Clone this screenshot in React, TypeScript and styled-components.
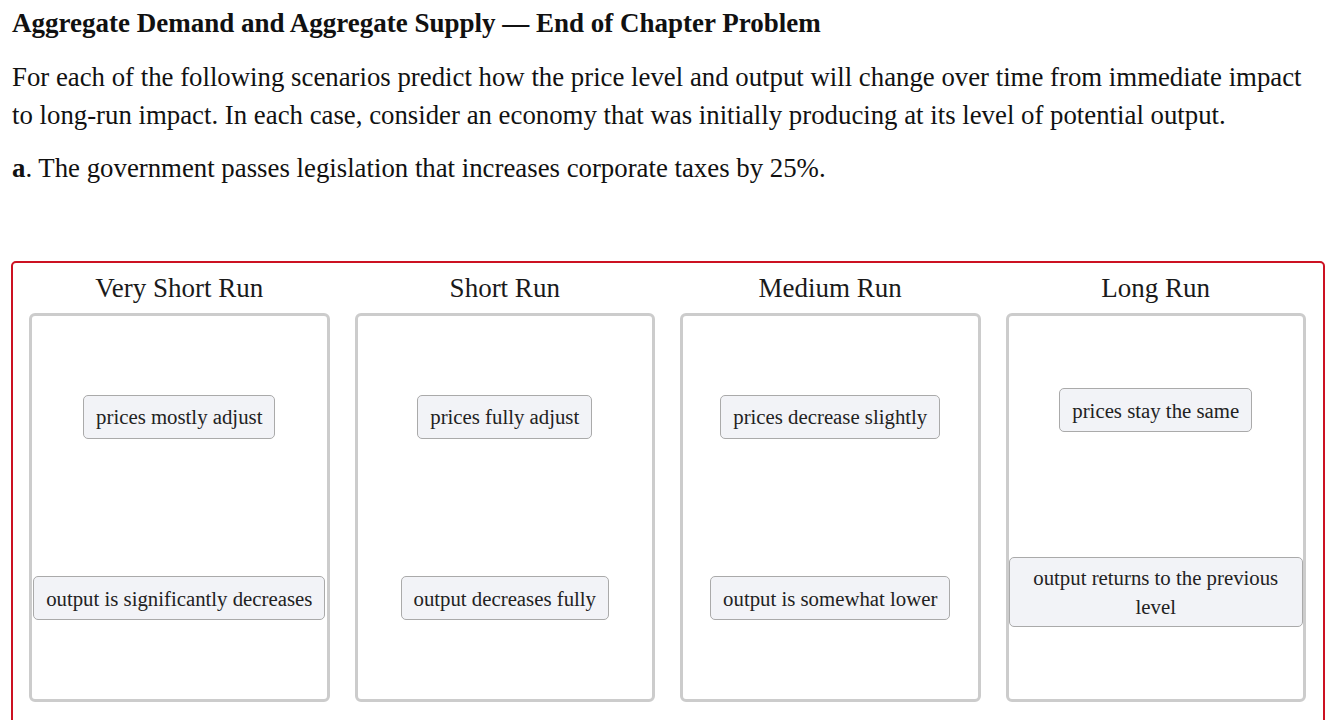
import styled, { createGlobalStyle } from "styled-components";

type Stage = {
  title: string;
  cards: string[];
};

const stages: Stage[] = [
  {
    title: "Very Short Run",
    cards: ["prices mostly adjust", "output is significantly decreases"],
  },
  {
    title: "Short Run",
    cards: ["prices fully adjust", "output decreases fully"],
  },
  {
    title: "Medium Run",
    cards: ["prices decrease slightly", "output is somewhat lower"],
  },
  {
    title: "Long Run",
    cards: ["prices stay the same", "output returns to the previous level"],
  },
];

const GlobalStyle = createGlobalStyle`
  html, body {
    margin: 0;
    padding: 0;
    background: #ffffff;
  }
  body {
    font-family: "Liberation Serif", "Times New Roman", serif;
    color: #111111;
  }
`;

const Page = styled.div`
  padding: 6px 15px 0 11px;
`;

const Title = styled.h1`
  margin: 0 0 0 1px;
  font-size: 27px;
  font-weight: 700;
  line-height: 34px;
`;

const Prompt = styled.p`
  margin: 18px 0 0 1px;
  font-size: 26.8px;
  line-height: 38px;
`;

const Part = styled.p`
  margin: 15px 0 0 1px;
  font-size: 26.8px;
  line-height: 38px;
`;

const Board = styled.div`
  margin-top: 74px;
  border: 2px solid #cc1122;
  border-radius: 5px;
  padding: 8px 17px 24px 16px;
  display: grid;
  grid-template-columns: repeat(4, 1fr);
  column-gap: 25px;
`;

const Column = styled.div`
  display: flex;
  flex-direction: column;
`;

const ColumnTitle = styled.div`
  text-align: center;
  font-size: 27px;
  line-height: 34px;
  height: 42px;
  color: #1a1a1a;
`;

const DropZone = styled.div`
  height: 389px;
  box-sizing: border-box;
  border: 3px solid #cccccc;
  border-radius: 6px;
  padding: 10px 0;
  display: flex;
  flex-direction: column;
  justify-content: space-around;
  align-items: center;
`;

const Card = styled.div`
  box-sizing: border-box;
  max-width: 100%;
  min-height: 44px;
  display: flex;
  align-items: center;
  justify-content: center;
  background: #f2f3f7;
  border: 1px solid #aaaaaa;
  border-radius: 5px;
  padding: 5px 12px;
  font-size: 20.8px;
  line-height: 29px;
  text-align: center;
  color: #222222;
`;

export default function App() {
  return (
    <>
      <GlobalStyle />
      <Page>
        <Title>Aggregate Demand and Aggregate Supply — End of Chapter Problem</Title>
        <Prompt>
          For each of the following scenarios predict how the price level and
          output will change over time from immediate impact to long-run impact.
          In each case, consider an economy that was initially producing at its
          level of potential output.
        </Prompt>
        <Part>
          <b>a</b>. The government passes legislation that increases corporate
          taxes by 25%.
        </Part>
        <Board>
          {stages.map((stage) => (
            <Column key={stage.title}>
              <ColumnTitle>{stage.title}</ColumnTitle>
              <DropZone>
                {stage.cards.map((card) => (
                  <Card key={card}>{card}</Card>
                ))}
              </DropZone>
            </Column>
          ))}
        </Board>
      </Page>
    </>
  );
}
